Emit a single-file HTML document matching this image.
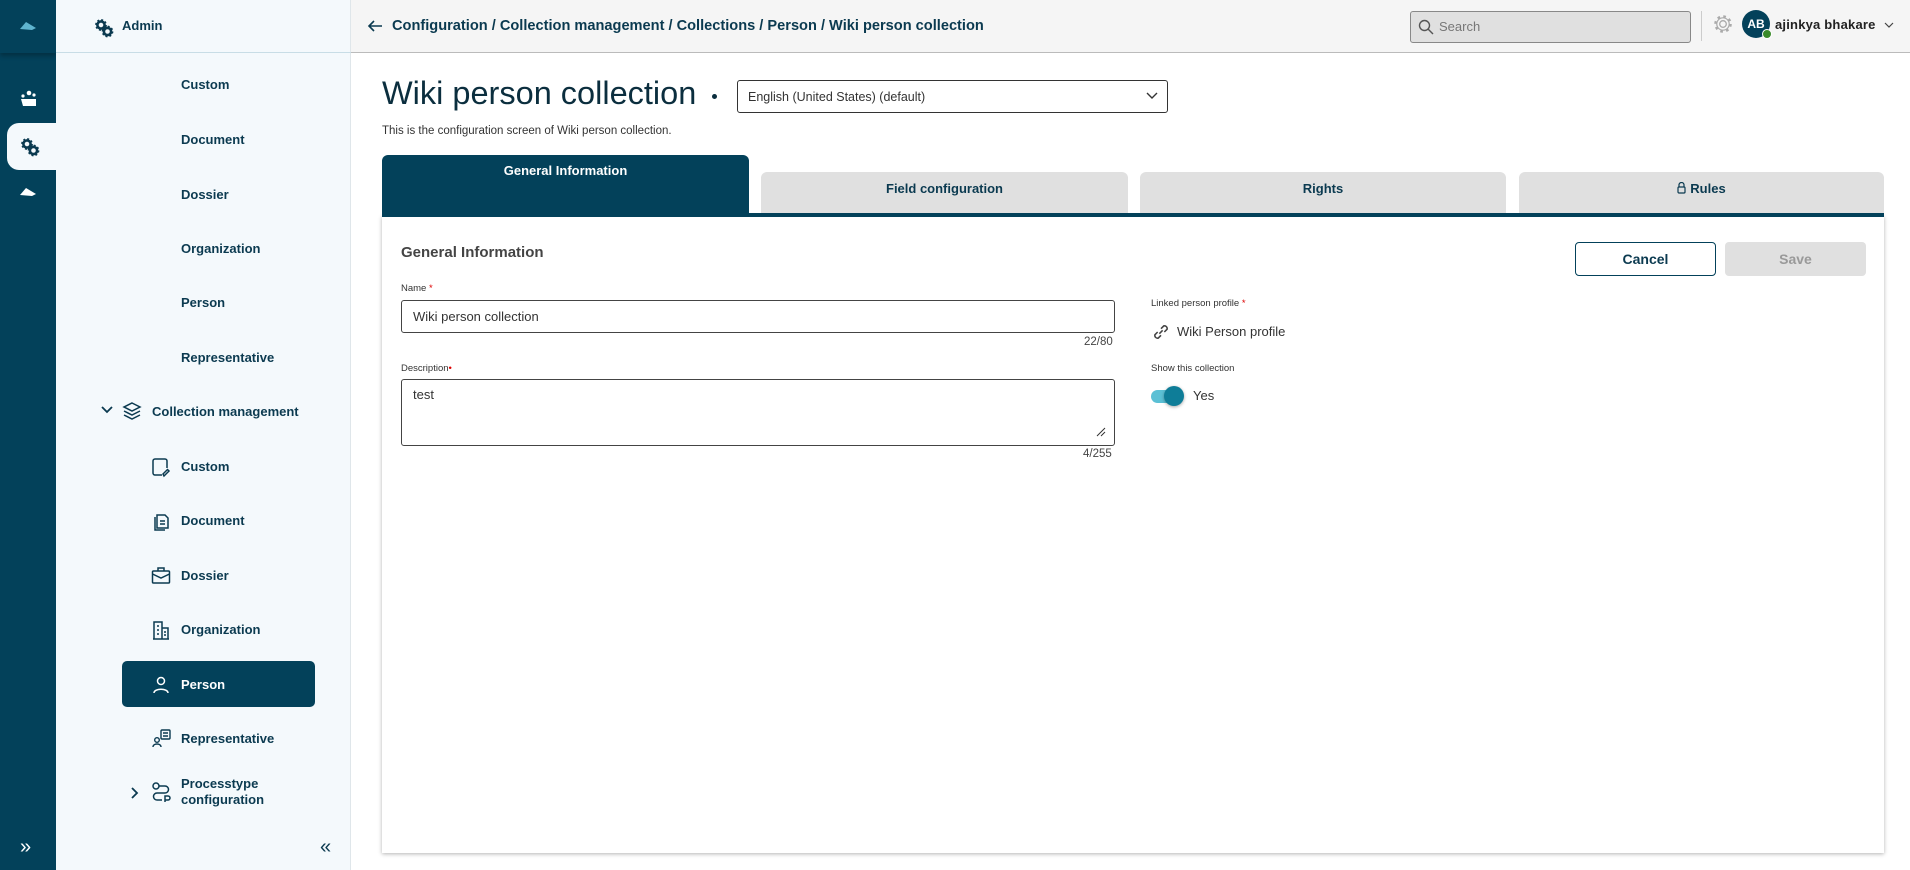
<!DOCTYPE html>
<html><head><meta charset="utf-8"><style>
*{box-sizing:border-box;margin:0;padding:0}
body{width:1910px;height:870px;overflow:hidden;font-family:"Liberation Sans",sans-serif;background:#fff;position:relative;color:#0b2e3e}
.a{position:absolute}
.rail{left:0;top:0;width:56px;height:870px;background:#03415a}
.side{left:56px;top:0;width:295px;height:870px;background:#f4f9fc;border-right:1px solid #dfe6ea}
.si{position:absolute;font-size:13px;font-weight:bold;color:#0b3a50;white-space:nowrap}
.hdr{left:351px;top:0;width:1559px;height:53px;background:#f5f5f5;border-bottom:1px solid #bbb}
.tab{position:absolute;background:#e0e0e0;border-radius:6px 6px 0 0;font-size:13px;font-weight:bold;color:#0b3a50;text-align:center}
.lbl{position:absolute;font-size:9.5px;color:#333}
.inp{position:absolute;border:1px solid #444;border-radius:3px;font-size:13px;color:#333;padding-left:11px}
.cnt{position:absolute;font-size:11.5px;color:#444}
svg{position:absolute}
</style></head><body>
<svg width="0" height="0" style="position:absolute"><defs>
<g id="cog"><circle r="3.6" fill="none" stroke="currentColor" stroke-width="2.6"/><circle r="4.9" fill="none" stroke="currentColor" stroke-width="2" stroke-dasharray="1.9 1.95"/></g>
</defs></svg>
<div class="a rail"></div>
<div class="a" style="left:0;top:0;width:56px;height:53px;background:#03415a;box-shadow:0 3px 4px rgba(0,0,0,.25)"></div>
<svg style="left:19px;top:20px" width="18" height="12" viewBox="0 0 18 12"><path d="M1 9 L7 2 L17 8 L13 10 Z" fill="#5fb4cf"/></svg>
<svg style="left:18px;top:90px" width="20" height="17" viewBox="0 0 20 17"><circle cx="11" cy="3" r="2.3" fill="#fff"/><circle cx="5" cy="6" r="1.6" fill="#fff"/><circle cx="16" cy="5" r="1.6" fill="#fff"/><path d="M3 9 H18 V16 H5 Z" fill="#fff"/></svg>
<div class="a" style="left:7px;top:123px;width:50px;height:47px;background:#f4f9fc;border-radius:12px 0 0 12px"></div>
<svg style="left:20px;top:137px;color:#0b3a50" width="20" height="20" viewBox="0 0 20 20"><use href="#cog" x="7" y="7"/><use href="#cog" x="13.5" y="13.5"/></svg>
<svg style="left:19px;top:186px" width="18" height="12" viewBox="0 0 18 12"><path d="M1 9 L7 2 L17 8 L13 10 Z" fill="#fff"/></svg>
<div class="a" style="left:20px;top:836px;color:#fff;font-size:20px">»</div>

<div class="a side"></div>
<div class="a" style="left:56px;top:52px;width:295px;height:1px;background:#c8dde6"></div>
<svg style="left:94px;top:18px;color:#0b3a50" width="20" height="20" viewBox="0 0 20 20"><use href="#cog" x="7" y="7"/><use href="#cog" x="13.5" y="13.5"/></svg>
<div class="si" style="left:122px;top:18px">Admin</div>
<div class="si" style="left:181px;top:77px">Custom</div>
<div class="si" style="left:181px;top:132px">Document</div>
<div class="si" style="left:181px;top:187px">Dossier</div>
<div class="si" style="left:181px;top:241px">Organization</div>
<div class="si" style="left:181px;top:295px">Person</div>
<div class="si" style="left:181px;top:350px">Representative</div>
<svg style="left:100px;top:405px" width="14" height="10" viewBox="0 0 14 10"><path d="M2 2 L7 7 L12 2" fill="none" stroke="#0b3a50" stroke-width="1.8"/></svg>
<svg style="left:122px;top:402px" width="20" height="18" viewBox="0 0 20 18"><g fill="none" stroke="#0b3a50" stroke-width="1.5"><path d="M10 1 L18 5 L10 9 L2 5 Z"/><path d="M2 9 L10 13 L18 9"/><path d="M2 13 L10 17 L18 13"/></g></svg>
<div class="si" style="left:152px;top:404px">Collection management</div>
<svg style="left:151px;top:458px" width="20" height="20" viewBox="0 0 20 20"><path d="M16 10 V3 A2 2 0 0 0 14 1 H4 A2 2 0 0 0 2 3 V15 A2 2 0 0 0 4 17 H11 M13 18 L18 13 L16.5 11.5 L12 16 Z" fill="none" stroke="#0b3a50" stroke-width="1.5"/></svg>
<div class="si" style="left:181px;top:459px">Custom</div>
<svg style="left:152px;top:512px" width="18" height="20" viewBox="0 0 18 20"><g fill="none" stroke="#0b3a50" stroke-width="1.5"><path d="M5 3 H13 L16 6 V16 H5 Z"/><path d="M3 5 V18 H13"/><path d="M8 9 H13 M8 12 H13"/></g></svg>
<div class="si" style="left:181px;top:513px">Document</div>
<svg style="left:151px;top:566px" width="20" height="18" viewBox="0 0 20 18"><g fill="none" stroke="#0b3a50" stroke-width="1.5"><rect x="1.5" y="5" width="17" height="12" rx="1"/><path d="M7 5 V2 H13 V5 M1.5 8 L10 12 L18.5 8"/></g></svg>
<div class="si" style="left:181px;top:568px">Dossier</div>
<svg style="left:152px;top:620px" width="18" height="20" viewBox="0 0 18 20"><g fill="none" stroke="#0b3a50" stroke-width="1.5"><path d="M2 19 V2 H10 V19 M10 8 H16 V19 M1 19 H17 M5 6 H7 M5 10 H7 M5 14 H7 M12 12 H14 M12 15 H14"/></g></svg>
<div class="si" style="left:181px;top:622px">Organization</div>
<div class="a" style="left:122px;top:661px;width:193px;height:46px;background:#03415a;border-radius:5px"></div>
<svg style="left:153px;top:676px" width="16" height="18" viewBox="0 0 16 18"><g fill="none" stroke="#fff" stroke-width="1.5"><circle cx="8" cy="5" r="3.5"/><path d="M1 17 C1 12 15 12 15 17"/></g></svg>
<div class="si" style="left:181px;top:677px;color:#fff">Person</div>
<svg style="left:152px;top:728px" width="20" height="20" viewBox="0 0 20 20"><g fill="none" stroke="#0b3a50" stroke-width="1.4"><rect x="9" y="2" width="9" height="9" rx="1"/><path d="M11 5 H16 M11 8 H16"/><circle cx="5" cy="12" r="2.3"/><path d="M1 19 C1 15 9 15 9 19"/></g></svg>
<div class="si" style="left:181px;top:731px">Representative</div>
<svg style="left:130px;top:786px" width="10" height="14" viewBox="0 0 10 14"><path d="M2 2 L7 7 L2 12" fill="none" stroke="#0b3a50" stroke-width="1.8"/></svg>
<svg style="left:151px;top:782px" width="20" height="22" viewBox="0 0 20 22"><g fill="none" stroke="#0b3a50" stroke-width="1.5"><circle cx="5" cy="4" r="3"/><path d="M8 4 H14 A3.5 3.5 0 0 1 14 11 H6 A3.5 3.5 0 0 0 6 18 H11"/><path d="M14 20 V14 H17 A2 2 0 0 1 17 18 H14"/></g></svg>
<div class="si" style="left:181px;top:776px;line-height:16px">Processtype<br>configuration</div>
<div class="a" style="left:320px;top:836px;color:#0b3a50;font-size:20px">«</div>

<div class="a hdr"></div>
<svg style="left:367px;top:19px" width="16" height="14" viewBox="0 0 16 14"><path d="M15 7 H2 M7 2 L2 7 L7 12" fill="none" stroke="#0b3a50" stroke-width="1.6"/></svg>
<div class="a" style="left:392px;top:18px;font-size:14.6px;font-weight:bold;color:#0b3a50">Configuration / Collection management / Collections / Person / Wiki person collection</div>
<div class="a" style="left:1410px;top:11px;width:281px;height:32px;background:#e0e0e0;border:1px solid #888;border-radius:3px"></div>
<svg style="left:1418px;top:19px" width="16" height="16" viewBox="0 0 16 16"><g fill="none" stroke="#555" stroke-width="1.4"><circle cx="6.5" cy="6.5" r="5"/><path d="M10 10 L15 15"/></g></svg>
<div class="a" style="left:1439px;top:19px;font-size:13px;color:#777">Search</div>
<div class="a" style="left:1701px;top:11px;width:1px;height:30px;background:#ccc"></div>
<svg style="left:1712px;top:13px;color:#aaa" width="22" height="22" viewBox="0 0 22 22"><circle cx="11" cy="11" r="3.3" fill="none" stroke="#aaa" stroke-width="1.3"/><circle cx="11" cy="11" r="7.5" fill="none" stroke="#aaa" stroke-width="2.6" stroke-dasharray="2.6 3.3"/><circle cx="11" cy="11" r="6.2" fill="none" stroke="#aaa" stroke-width="1.2"/></svg>
<div class="a" style="left:1742px;top:10px;width:28px;height:28px;border-radius:50%;background:#03415a;color:#fff;font-size:12px;font-weight:bold;text-align:center;line-height:28px">AB</div>
<div class="a" style="left:1762px;top:29px;width:10px;height:10px;border-radius:50%;background:#3a8a2a;border:1.5px solid #fff"></div>
<div class="a" style="left:1775px;top:17px;font-size:13px;font-weight:bold;color:#222;letter-spacing:.2px">ajinkya bhakare</div>
<svg style="left:1884px;top:22px" width="10" height="7" viewBox="0 0 10 7"><path d="M1 1 L5 5 L9 1" fill="none" stroke="#444" stroke-width="1.2"/></svg>

<div class="a" style="left:382px;top:75px;font-size:32.5px;color:#0b2e3e">Wiki person collection</div>
<div class="a" style="left:712px;top:94px;width:5px;height:5px;border-radius:50%;background:#0b2e3e"></div>
<div class="a" style="left:737px;top:80px;width:431px;height:33px;border:1px solid #333;border-radius:3px;font-size:12.5px;color:#333;padding:9px 0 0 10px">English (United States) (default)</div>
<svg style="left:1146px;top:92px" width="12" height="8" viewBox="0 0 12 8"><path d="M1 1 L6 6 L11 1" fill="none" stroke="#333" stroke-width="1.4"/></svg>
<div class="a" style="left:382px;top:125px;font-size:11.5px;color:#333">This is the configuration screen of Wiki person collection.</div>

<div class="a" style="left:382px;top:216px;width:1502px;height:637px;background:#fff;box-shadow:0 1px 4px rgba(0,0,0,.3)"></div>
<div class="tab" style="left:382px;top:155px;width:367px;height:62px;background:#03415a;color:#fff;padding-top:8px">General Information</div>
<div class="tab" style="left:761px;top:172px;width:367px;height:44px;padding-top:9px">Field configuration</div>
<div class="tab" style="left:1140px;top:172px;width:366px;height:44px;padding-top:9px">Rights</div>
<div class="tab" style="left:1519px;top:172px;width:365px;height:44px;padding-top:9px"><svg style="position:relative;left:auto;top:1px;margin-right:4px" width="9" height="12" viewBox="0 0 9 12"><g fill="none" stroke="#0b3a50" stroke-width="1.2"><path d="M2 5 V3 A2.5 2.5 0 0 1 7 3 V5"/><rect x="1" y="5" width="7" height="6" rx="1"/></g></svg>Rules</div>
<div class="a" style="left:382px;top:213px;width:1502px;height:4px;background:#03415a"></div>

<div class="a" style="left:401px;top:244px;font-size:15px;font-weight:bold;color:#444">General Information</div>
<div class="a" style="left:1575px;top:242px;width:141px;height:34px;border:1px solid #03415a;border-radius:4px;font-size:14px;font-weight:bold;color:#0b3a50;text-align:center;line-height:32px">Cancel</div>
<div class="a" style="left:1725px;top:242px;width:141px;height:34px;background:#e0e0e0;border-radius:4px;font-size:14px;font-weight:bold;color:#999;text-align:center;line-height:34px">Save</div>

<div class="lbl" style="left:401px;top:283px">Name <span style="color:#d00">*</span></div>
<div class="inp" style="left:401px;top:300px;width:714px;height:33px;line-height:31px">Wiki person collection</div>
<div class="cnt" style="left:1084px;top:336px">22/80</div>
<div class="lbl" style="left:401px;top:363px">Description<span style="color:#d00">•</span></div>
<div class="inp" style="left:401px;top:379px;width:714px;height:67px;padding-top:7px">test</div>
<svg style="left:1096px;top:427px" width="10" height="10" viewBox="0 0 10 10"><path d="M9 1 L1 9 M9 5 L5 9" stroke="#333" stroke-width="1"/></svg>
<div class="cnt" style="left:1083px;top:448px">4/255</div>

<div class="lbl" style="left:1151px;top:298px">Linked person profile <span style="color:#d00">*</span></div>
<svg style="left:1151px;top:322px" width="20" height="20" viewBox="0 0 18 18"><g fill="none" stroke="#444" stroke-width="1.4"><path d="M7.5 10.5 L10.5 7.5"/><path d="M6 9 L3.5 11.5 A2.5 2.5 0 0 0 6.5 14.5 L9 12"/><path d="M9 6 L11.5 3.5 A2.5 2.5 0 0 1 14.5 6.5 L12 9"/></g></svg>
<div class="a" style="left:1177px;top:324px;font-size:13px;color:#333">Wiki Person profile</div>
<div class="lbl" style="left:1151px;top:363px">Show this collection</div>
<div class="a" style="left:1151px;top:390px;width:30px;height:13px;border-radius:7px;background:#5bc0d5"></div>
<div class="a" style="left:1164px;top:386px;width:20px;height:20px;border-radius:50%;background:#0e7d98;box-shadow:0 1px 3px rgba(0,0,0,.35)"></div>
<div class="a" style="left:1193px;top:388px;font-size:13px;color:#333">Yes</div>
</body></html>
